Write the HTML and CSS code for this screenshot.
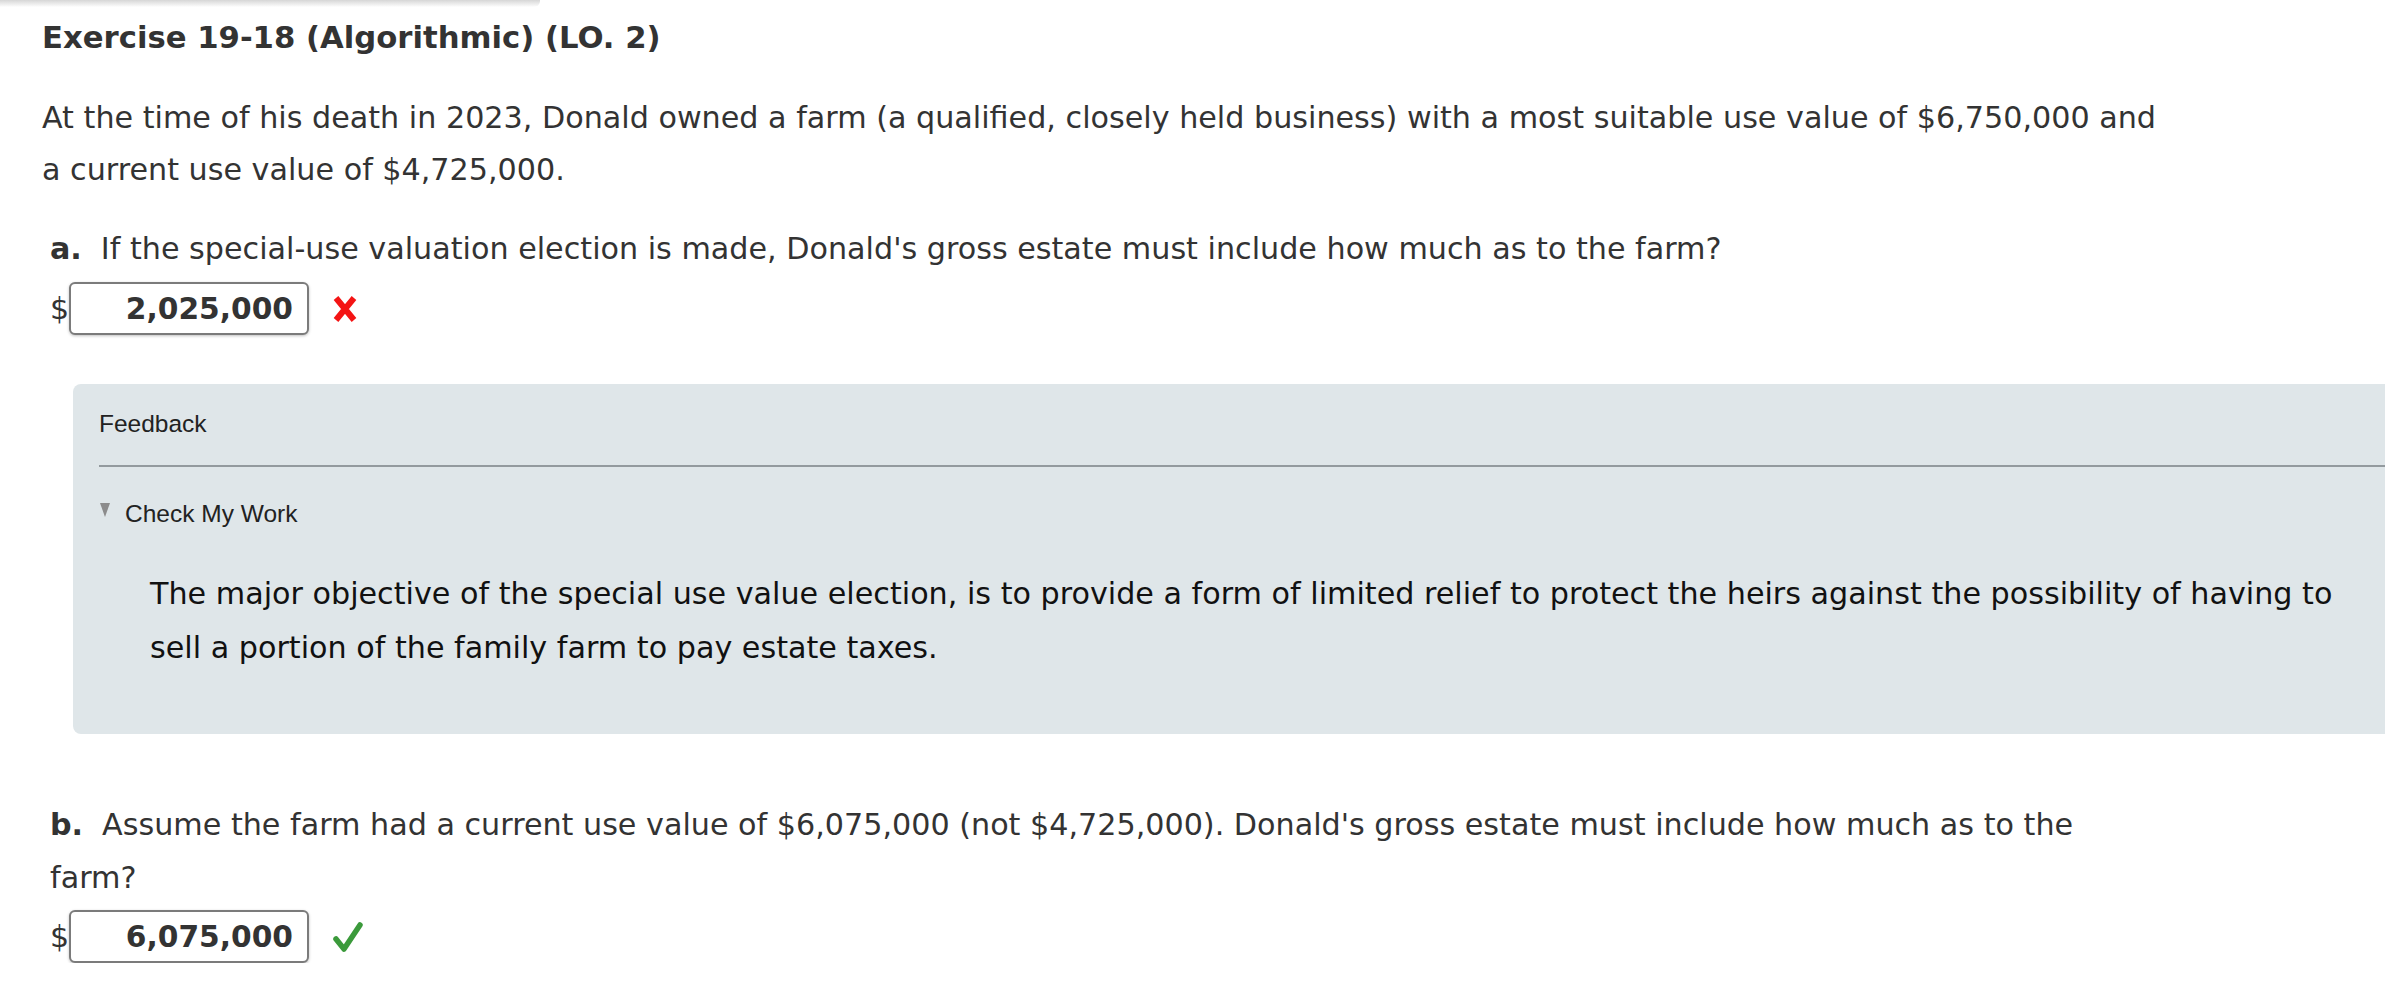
FILE: index.html
```html
<!DOCTYPE html>
<html>
<head>
<meta charset="utf-8">
<link rel="stylesheet" href="styles.css">
</head>
<body>
<div class="top-shadow"></div>
<main class="page">
  <h1 class="title">Exercise 19-18 (Algorithmic) (LO. 2)</h1>
  <p class="intro">At the time of his death in 2023, Donald owned a farm (a qualified, closely held business) with a most suitable use value of $6,750,000 and a current use value of $4,725,000.</p>

  <section class="part part-a">
    <p class="question"><b class="label">a.</b>If the special-use valuation election is made, Donald's gross estate must include how much as to the farm?</p>
    <div class="answer-row">
      <span class="dollar">$</span>
      <span class="answer-box">2,025,000</span>
      <span class="mark wrong"><svg width="24" height="26" viewBox="0 0 24 26"><path d="M3 2 L21 24 M21 2 L3 24" fill="none" stroke="#f41414" stroke-width="6"/></svg></span>
    </div>
  </section>

  <section class="feedback">
    <div class="feedback-head">Feedback</div>
    <div class="check-row"><span class="triangle"></span><span class="check-label">Check My Work</span></div>
    <p class="feedback-text">The major objective of the special use value election, is to provide a form of limited relief to protect the heirs against the possibility of having to sell a portion of the family farm to pay estate taxes.</p>
  </section>

  <section class="part part-b">
    <p class="question q-b"><b class="label">b.</b>Assume the farm had a current use value of $6,075,000 (not $4,725,000). Donald's gross estate must include how much as to the farm?</p>
    <div class="answer-row">
      <span class="dollar">$</span>
      <span class="answer-box">6,075,000</span>
      <span class="mark right"><svg width="30" height="32" viewBox="0 0 30 32"><path d="M3 18 L11 28 L27 4" fill="none" stroke="#3b9a3b" stroke-width="5.5" stroke-linecap="round" stroke-linejoin="round"/></svg></span>
    </div>
  </section>
</main>
</body>
</html>
```

FILE: styles.css
```css
html, body {
  margin: 0;
  padding: 0;
  background: #fff;
}
body {
  overflow: hidden;
  font-family: "DejaVu Sans", Verdana, sans-serif;
  color: #333;
}
.top-shadow {
  width: 540px;
  height: 7px;
  background: linear-gradient(#d6d6d6, #f6f6f6 80%, #fff);
  border-radius: 0 0 6px 0;
}
.page {
  padding-left: 42px;
}
.title {
  margin: 11px 0 0 0;
  font-size: 30.7px;
  line-height: 40px;
  font-weight: bold;
  color: #333;
}
.intro {
  margin: 34px 0 0 0;
  font-size: 30.2px;
  line-height: 51.7px;
  max-width: 2128px;
}
.part {
  padding-left: 8px;
}
.question {
  margin: 28px 0 0 0;
  font-size: 30.2px;
  line-height: 52px;
}
.q-b {
  margin-top: 64px;
  line-height: 53px;
  max-width: 2075px;
}
.label {
  font-weight: bold;
  margin-right: 19px;
}
.answer-row {
  display: flex;
  align-items: center;
  margin-top: 7px;
  height: 53px;
}
.part-b .answer-row {
  margin-top: 6px;
}
.dollar {
  font-size: 30px;
  width: 19px;
}
.answer-box {
  box-sizing: border-box;
  width: 240px;
  height: 53px;
  border: 2px solid #7b7b7b;
  border-radius: 6px;
  box-shadow: 0 1px 3px rgba(0,0,0,0.25);
  font-weight: bold;
  font-size: 29.7px;
  line-height: 49px;
  text-align: right;
  padding-right: 14px;
  color: #333;
  background: #fff;
}
.mark {
  margin-left: 24px;
  display: flex;
  align-items: center;
}
.wrong svg, .right svg {
  display: block;
}
.feedback {
  margin: 49px 0 0 31px;
  background: #dfe6e9;
  border-radius: 8px 0 0 8px;
  padding: 25px 0 59px 26px;
  font-family: "Liberation Sans", Arial, sans-serif;
  color: #222;
}
.feedback-head {
  font-size: 24.5px;
  line-height: 30px;
  padding-bottom: 26px;
  border-bottom: 2px solid #939a9e;
}
.check-row {
  display: flex;
  align-items: center;
  margin-top: 32px;
  height: 30px;
  font-size: 24.5px;
}
.triangle {
  width: 0;
  height: 0;
  border-left: 5px solid transparent;
  border-right: 5px solid transparent;
  border-top: 14px solid #8c8c8c;
  margin: -8px 15px 0 1px;
}
.feedback-text {
  margin: 38px 0 0 51px;
  font-family: "DejaVu Sans", Verdana, sans-serif;
  font-size: 30.2px;
  line-height: 54px;
  color: #111;
  max-width: 2205px;
}
```
